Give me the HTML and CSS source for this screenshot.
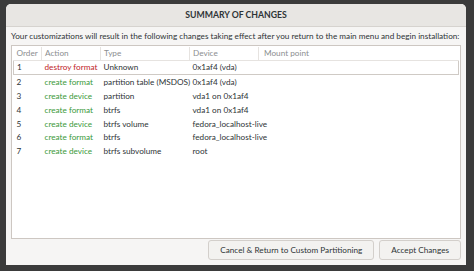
FILE: index.html
```html
<!DOCTYPE html>
<html lang="en">
<head>
	<meta charset="UTF-8">
	<title>Summary of changes</title>
	<link rel="stylesheet" href="styles.css">
</head>
<body>
	<div class="dialog">
		<div class="header">SUMMARY OF CHANGES</div>
		<div class="content">
			<p class="intro">Your customizations will result in the following changes taking effect after you return to the main menu and begin installation:</p>
			<div class="list">
				<table class="changes">
					<thead>
						<tr>
							<th class="c-order">Order</th>
							<th class="c-action">Action</th>
							<th class="c-type">Type</th>
							<th class="c-device">Device</th>
							<th class="c-mount">Mount point</th>
						</tr>
					</thead>
					<tbody>
						<tr class="selected"><td>1</td><td class="destroy">destroy format</td><td>Unknown</td><td>0x1af4 (vda)</td><td></td></tr>
						<tr><td>2</td><td class="create">create format</td><td>partition table (MSDOS)</td><td>0x1af4 (vda)</td><td></td></tr>
						<tr><td>3</td><td class="create">create device</td><td>partition</td><td>vda1 on 0x1af4</td><td></td></tr>
						<tr><td>4</td><td class="create">create format</td><td>btrfs</td><td>vda1 on 0x1af4</td><td></td></tr>
						<tr><td>5</td><td class="create">create device</td><td>btrfs volume</td><td>fedora_localhost-live</td><td></td></tr>
						<tr><td>6</td><td class="create">create format</td><td>btrfs</td><td>fedora_localhost-live</td><td></td></tr>
						<tr><td>7</td><td class="create">create device</td><td>btrfs subvolume</td><td>root</td><td></td></tr>
					</tbody>
				</table>
			</div>
			<div class="buttons">
				<button class="btn">Cancel &amp; Return to Custom Partitioning</button>
				<button class="btn">Accept Changes</button>
			</div>
		</div>
	</div>
</body>
</html>
```

FILE: styles.css
```css
body {
    margin: 0;
    background-color: #3b3b3b;
    font-family: Lato, "Noto Sans", sans-serif;
    font-size: 8.2px;
    color: #2e3436;
}
.dialog {
    width: 460px;
    height: 261px;
    margin: 4px 0 0 6px;
    background-color: #f6f5f4;
    border-radius: 5px 5px 0 0;
    display: flex;
    flex-direction: column;
    overflow: hidden;
}
.header { /* 标题栏 */
    height: 22px;
    line-height: 22px;
    text-align: center;
    font-weight: bold;
    font-size: 8.7px;
    background-color: #e8e6e3;
    border-bottom: 1px solid #d6d3cf;
    color: #2e3436;
}
.content {
    flex: 1;
    display: flex;
    flex-direction: column;
    padding: 0 5px 5px 5px;
}
.intro {
    margin: 0;
    height: 18px;
    line-height: 18px;
    white-space: nowrap;
    font-size: 8.2px;
}
.list {
    flex: 1;
    background-color: #fff;
    border: 1px solid #cdc7c2;
    padding: 1px;
}
.changes {
    width: 100%;
    border-collapse: collapse;
    table-layout: fixed;
}
.changes th {
    box-sizing: border-box;
    text-align: left;
    font-weight: normal;
    color: #8b8e8f;
    height: 13px;
    padding: 0 3px;
    border-right: 1px solid #e6e3e0;
    border-bottom: 1px solid #e6e3e0;
}
.changes th:last-child {
    border-right: none;
}
.c-order { width: 28px; }
.c-action { width: 59px; }
.c-type { width: 89px; }
.c-device { width: 69px; }
.c-mount { padding-left: 5px !important; }
.changes td {
    height: 13.8px;
    padding: 0 3px;
    white-space: nowrap;
}
.selected td {
    border-top: 1px solid #cfcac5;
    border-bottom: 1px solid #cfcac5;
}
.selected td:first-child { border-left: 1px solid #cfcac5; }
.selected td:last-child { border-right: 1px solid #cfcac5; }
.destroy { color: #c01c28; }
.create { color: #3a9a3a; }
.buttons { /* 底部按钮 */
    display: flex;
    justify-content: flex-end;
    gap: 5px;
    padding-top: 1px;
}
.btn {
    height: 20px;
    font-family: inherit;
    font-size: 8.2px;
    color: #2e3436;
    background-color: #f3f2f0;
    border: 1px solid #d3cfcb;
    border-radius: 3px;
    padding: 0 11px;
}
```
